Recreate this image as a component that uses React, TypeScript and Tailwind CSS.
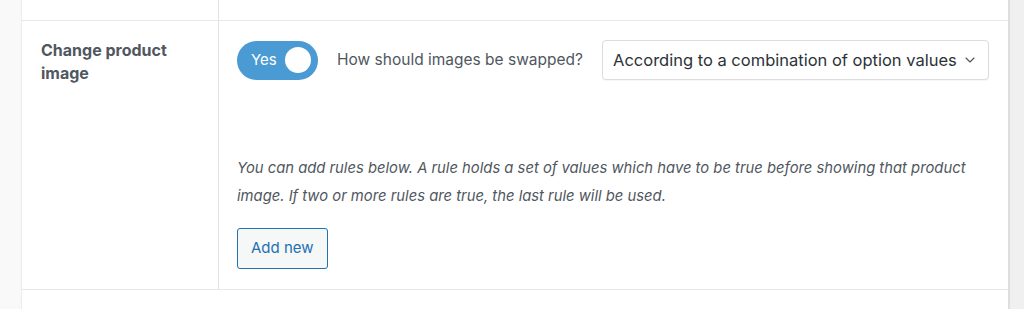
import { ChevronDown } from 'lucide-react';

const FONT = { fontFamily: 'Inter, "Liberation Sans", Arial, sans-serif' };

function Toggle() {
  return (
    <div className="flex h-[39px] w-[81px] shrink-0 items-center justify-between rounded-full bg-[#4a9ad3] pl-[14px] pr-[7px]">
      <span className="text-[15px] text-white">Yes</span>
      <span className="h-[26px] w-[26px] rounded-full bg-white" />
    </div>
  );
}

export default function App() {
  return (
    <div className="flex h-[309px] w-full bg-white" style={FONT}>
      {/* left admin gutter */}
      <div className="w-[22px] shrink-0 border-r border-[#ececec] bg-[#f9f9f9]" />

      <div className="flex flex-1 flex-col bg-white">
        {/* previous row tail */}
        <div className="flex h-[21px] border-b border-[#e8e8e8]">
          <div className="w-[197px] border-r border-[#e2e2e2]" />
          <div className="flex-1" />
        </div>

        {/* Change product image row */}
        <div className="flex h-[269px] border-b border-[#e8e8e8]">
          <div className="w-[197px] shrink-0 border-r border-[#e2e2e2] px-[19px] pt-[18px]">
            <div className="text-[16px] font-bold leading-[23px] text-[#50575e]">
              Change product image
            </div>
          </div>

          <div className="min-w-0 flex-1 pl-[18px] pt-[19px]">
            <div className="flex items-center">
              <Toggle />
              <span className="ml-[19px] shrink-0 whitespace-nowrap text-[15.5px] text-[#50575e]">How should images be swapped?</span>
              <div className="ml-[19px] flex h-[40px] w-[387px] shrink-0 items-center justify-between rounded-[4px] border border-[#dcdcde] bg-white pl-[10px] pr-[10px] shadow-[0_1px_1px_rgba(0,0,0,0.04)]">
                <span className="whitespace-nowrap text-[16.5px] text-[#2c3338]">According to a combination of option values</span>
                <ChevronDown className="h-[16px] w-[16px] shrink-0 text-[#50575e]" strokeWidth={1.75} />
              </div>
            </div>

            <p className="mt-[74px] whitespace-nowrap text-[14.8px] italic leading-[28px] text-[#50575e]">
              You can add rules below. A rule holds a set of values which have to be true before showing that product
              <br />
              image. If two or more rules are true, the last rule will be used.
            </p>

            <button className="mt-[18px] h-[41px] rounded-[3px] border border-[#2271b1] bg-[#f6f7f7] px-[13px] text-[15px] text-[#2271b1]">
              Add new
            </button>
          </div>
        </div>

        <div className="flex-1" />
      </div>

      {/* right gutter */}
      <div className="w-[16px] shrink-0 border-l-2 border-[#dedede] bg-[#f0f0f0]" />
    </div>
  );
}
